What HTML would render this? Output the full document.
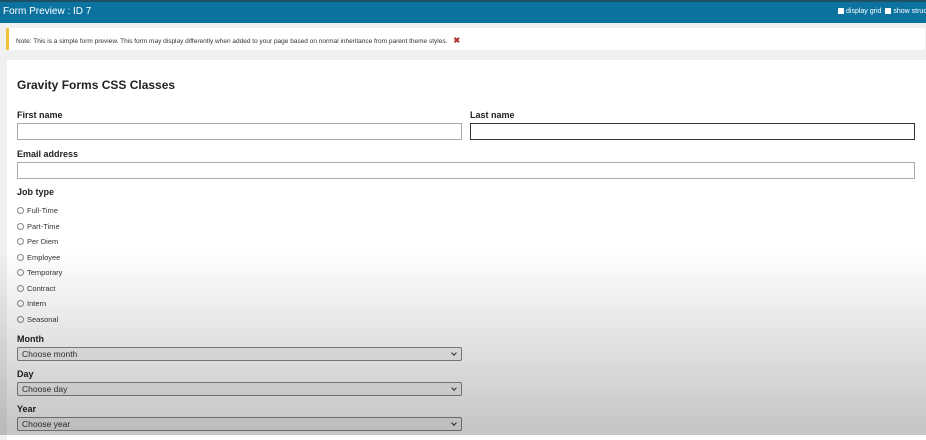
<!DOCTYPE html>
<html><head><style>
*{box-sizing:border-box;margin:0;padding:0}
body{width:926px;height:435px;overflow:hidden;position:relative;background:#f0f0f0;font-family:"Liberation Sans",Verdana,sans-serif;color:#222}
.top{position:absolute;left:0;top:0;width:926px;height:23px;background:#0c73a0;border-top:2px solid #1d4f66;color:#fff}
.top .t{position:absolute;left:3px;top:4px;font-size:10px}
.top .r{position:absolute;left:838px;top:6px;font-size:7px;white-space:nowrap}
.top .r i{display:inline-block;width:6px;height:6px;background:#fff;margin-right:2px;vertical-align:-1px}
.note{position:absolute;left:6px;top:28px;width:919px;height:22px;background:#fff;border-left:3px solid #f0c33c;font-size:6.5px;padding:8px 0 0 7px;color:#333}
.note b{color:#b32d2e;margin-left:6px;font-size:8px}
.card{position:absolute;left:7px;top:60px;width:919px;height:380px;background:#fff}
.a{position:absolute;font-size:9px;font-weight:bold}
h1{position:absolute;left:17px;top:78px;font-size:12px;font-weight:bold}
.in{position:absolute;height:17px;border:1px solid #aaa;background:#fff}
.rad{position:absolute;left:17px;font-size:7.5px;color:#333}
.rad i{display:inline-block;width:7px;height:7px;border:1px solid #888;border-radius:50%;margin-right:3px;vertical-align:-1px}
.sel{position:absolute;left:17px;width:445px;height:14px;border:1px solid #888;border-radius:2px;background:#f4f4f4;font-size:8.5px;padding:1px 0 0 4px;color:#333}
.sel:after{content:"";position:absolute;right:5px;top:3px;width:3px;height:3px;border-right:1.5px solid #333;border-bottom:1.5px solid #333;transform:rotate(45deg)}
.ov{position:absolute;left:0;top:0;width:926px;height:435px;background:linear-gradient(to bottom,rgba(0,0,0,0) 0,rgba(0,0,0,0) 250px,rgba(0,0,0,0.23) 435px);pointer-events:none}
</style></head><body>
<div class="top"><span class="t">Form Preview : ID 7</span><span class="r"><i></i>display grid <i style="margin-left:2px"></i>show structure</span></div>
<div class="note">Note: This is a simple form preview. This form may display differently when added to your page based on normal inheritance from parent theme styles.<b>✖</b></div>
<div class="card"></div>
<h1>Gravity Forms CSS Classes</h1>
<div class="a" style="left:17px;top:110px">First name</div>
<div class="a" style="left:470px;top:110px">Last name</div>
<div class="in" style="left:17px;top:123px;width:445px"></div>
<div class="in" style="left:470px;top:123px;width:445px;border:1.5px solid #333"></div>
<div class="a" style="left:17px;top:149px">Email address</div>
<div class="in" style="left:17px;top:162px;width:898px"></div>
<div class="a" style="left:17px;top:187px">Job type</div>
<div class="rad" style="top:206px"><i></i>Full-Time</div>
<div class="rad" style="top:222px"><i></i>Part-Time</div>
<div class="rad" style="top:237px"><i></i>Per Diem</div>
<div class="rad" style="top:253px"><i></i>Employee</div>
<div class="rad" style="top:268px"><i></i>Temporary</div>
<div class="rad" style="top:284px"><i></i>Contract</div>
<div class="rad" style="top:299px"><i></i>Intern</div>
<div class="rad" style="top:315px"><i></i>Seasonal</div>
<div class="a" style="left:17px;top:334px">Month</div>
<div class="sel" style="top:347px">Choose month</div>
<div class="a" style="left:17px;top:369px">Day</div>
<div class="sel" style="top:382px">Choose day</div>
<div class="a" style="left:17px;top:404px">Year</div>
<div class="sel" style="top:417px">Choose year</div>
<div class="ov"></div>
</body></html>
